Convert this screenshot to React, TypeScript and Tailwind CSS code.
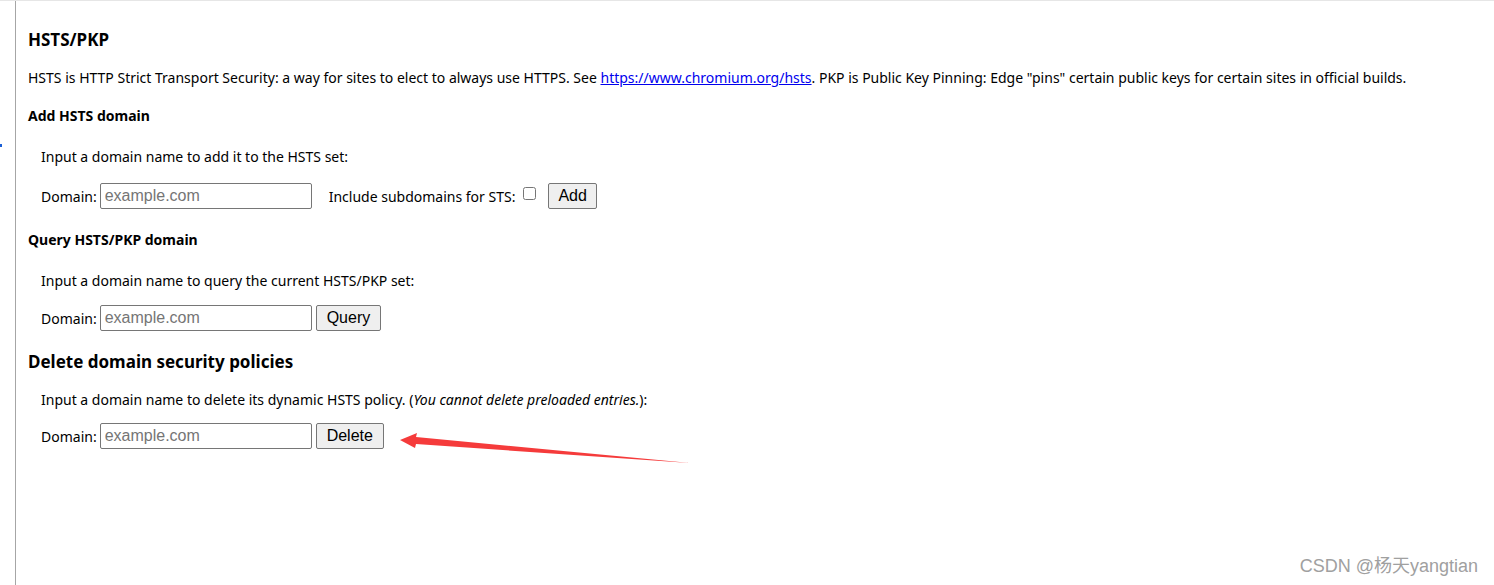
import React from "react";

const uiFont = "font-['Noto_Sans',sans-serif]";

function DomainInput() {
  return (
    <input
      type="text"
      placeholder="example.com"
      className="h-[26px] w-[212px] rounded-[2px] border border-[#767676] bg-white px-[4px] font-['Liberation_Sans',Arial,sans-serif] text-[16px] text-black placeholder:text-[#757575] outline-none"
    />
  );
}

function Button({ children, wide }: { children: React.ReactNode; wide?: boolean }) {
  return (
    <button
      className={`h-[26px] rounded-[2px] border border-[#767676] bg-[#efefef] ${wide ? "px-[10px]" : "px-[9px]"} font-['Liberation_Sans',Arial,sans-serif] text-[16px] leading-none text-black`}
    >
      {children}
    </button>
  );
}

export default function App() {
  return (
    <div className={`relative h-[585px] w-[1494px] overflow-hidden border-t border-[#e6e6e6] bg-white text-black ${uiFont}`}>
      {/* little marker on the far edge */}
      <div className="absolute left-0 top-[143px] h-[3px] w-[2px] bg-[#1a5fd6]" />

      <div className="ml-[15px] h-full border-l border-[#a6a6a6] pl-[12px] pt-[27px] text-[14px]">
        <h2 className="h-[24px] text-[17px] font-bold leading-[24px]">HSTS/PKP</h2>
        <p className="mt-[16px] leading-[20px]">
          HSTS is HTTP Strict Transport Security: a way for sites to elect to always use HTTPS. See{" "}
          <a href="#" className="text-[#0000ee] underline">https://www.chromium.org/hsts</a>. PKP is Public Key
          Pinning: Edge "pins" certain public keys for certain sites in official builds.
        </p>

        {/* add */}
        <h3 className="mt-[18px] font-bold leading-[20px]">Add HSTS domain</h3>
        <div className="pl-[13px]">
          <p className="mt-[21px] leading-[20px]">Input a domain name to add it to the HSTS set:</p>
          <div className="mt-[16px] flex items-center">
            <span className="mr-[3px]">Domain:</span>
            <DomainInput />
            <span className="ml-[17px]">Include subdomains for STS:</span>
            <input type="checkbox" className="mb-[6px] ml-[8px] mr-[12px] h-[13px] w-[13px]" />
            <Button>Add</Button>
          </div>
        </div>

        {/* query */}
        <h3 className="mt-[21px] font-bold leading-[20px]">Query HSTS/PKP domain</h3>
        <div className="pl-[13px]">
          <p className="mt-[21px] leading-[20px]">Input a domain name to query the current HSTS/PKP set:</p>
          <div className="mt-[14px] flex items-center gap-[4px]">
            <span className="mr-[-1px]">Domain:</span>
            <DomainInput />
            <Button wide>Query</Button>
          </div>
        </div>

        {/* delete */}
        <h2 className="mt-[19px] h-[24px] text-[17px] font-bold leading-[24px]">Delete domain security policies</h2>
        <div className="pl-[13px]">
          <p className="mt-[16px] leading-[20px]">
            Input a domain name to delete its dynamic HSTS policy. (<i>You cannot delete preloaded entries.</i>):
          </p>
          <div className="mt-[13px] flex items-center gap-[4px]">
            <span className="mr-[-1px]">Domain:</span>
            <DomainInput />
            <Button wide>Delete</Button>
          </div>
        </div>
      </div>

      {/* red annotation arrow */}
      <svg className="pointer-events-none absolute left-0 top-0" width="1494" height="585">
        <polygon points="400,439 417,432 416,436 690,462 416,443 415,447" fill="#f53b3b" />
      </svg>

      <div className="absolute bottom-[5px] right-[16px] font-['Liberation_Sans','Noto_Sans_CJK_SC',sans-serif] text-[18px] text-[#a0a0a0]">
        CSDN @杨天yangtian
      </div>
    </div>
  );
}
